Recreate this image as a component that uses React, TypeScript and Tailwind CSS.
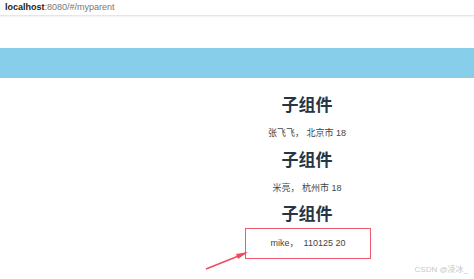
export default function App() {
  const items = [
    { text: '张飞飞， 北京市 18', top: 'mt-[18px]' },
    { text: '米亮， 杭州市 18', top: 'mt-[12px]' },
  ];

  return (
    <div
      className="relative w-[474px] h-[279px] overflow-hidden bg-white text-[#2c3e50]"
      style={{ fontFamily: '"Liberation Sans", "Noto Sans CJK SC", sans-serif' }}
    >
      {/* browser address bar */}
      <div className="h-[16px] flex items-center pl-[5px] text-[9px] leading-none border-b border-[#e6e6e6] shadow-[0_1px_2px_rgba(0,0,0,0.06)]">
        <span className="font-bold text-[#222]">localhost</span>
        <span className="text-[#777]">:8080/#/myparent</span>
      </div>

      <div className="h-[32px]" />
      <div className="h-[30px] bg-[#87ceeb]" />

      <div className="pl-[140px] text-center">
        {items.map((item, i) => (
          <div key={i}>
            <h2 className={`${item.top} text-[17px] leading-[20px] font-bold text-[#263545]`}>子组件</h2>
            <p className="mt-[12px] text-[9px] leading-[11px] text-[#444]">{item.text}</p>
          </div>
        ))}
        <h2 className="mt-[11px] text-[17px] leading-[20px] font-bold text-[#263545]">子组件</h2>
        <div className="ml-[105px] mt-[3px] w-[126px] h-[31px] border-[1.5px] border-[#ee5a6a] flex items-center justify-center text-[9px] text-[#444]">
          mike，&nbsp;&nbsp;110125 20
        </div>
      </div>

      {/* annotation arrow */}
      <svg className="absolute left-0 top-0" width="474" height="279">
        <line x1="206" y1="269" x2="246" y2="253" stroke="#ef4a5e" strokeWidth="1.4" />
        <polygon points="248,252 236,254 238,259" fill="#ef4a5e" />
      </svg>

      <div className="absolute right-[6px] bottom-[3px] text-[8px] text-[#c8c8c8]">CSDN @凌冰_</div>
    </div>
  );
}
